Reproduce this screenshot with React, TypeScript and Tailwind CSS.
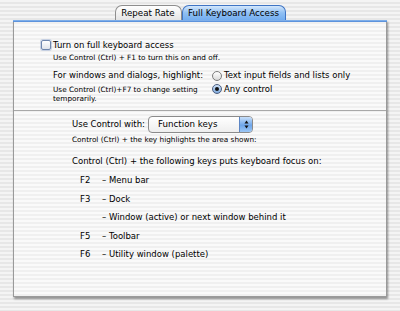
const stripes =
  "bg-[repeating-linear-gradient(180deg,#f4f4f4_0px,#f4f4f4_2px,#e7e7e7_2px,#e7e7e7_4px)]";

function Checkbox() {
  return (
    <span className="block w-[10px] h-[10px] rounded-[2px] border border-[#6f86ad] bg-[linear-gradient(180deg,#ffffff,#dfe3ea)] shadow-[0_0_0_1px_rgba(120,150,200,0.35)]" />
  );
}

function Radio({ checked }: { checked?: boolean }) {
  return (
    <span
      className={
        checked
          ? "flex items-center justify-center w-[10px] h-[10px] rounded-full border border-[#4d5f80] bg-[linear-gradient(180deg,#cfe2f8,#7fa9dc)]"
          : "block w-[10px] h-[10px] rounded-full border border-[#7c7c7c] bg-[linear-gradient(180deg,#ffffff,#d9d9d9)]"
      }
    >
      {checked && <span className="block w-[4px] h-[4px] rounded-full bg-[#111]" />}
    </span>
  );
}

function Popup() {
  return (
    <div className="flex w-[105px] h-[17px] rounded-[4px] border border-[#8b8b8b] bg-[linear-gradient(180deg,#ffffff,#eeeeee)] overflow-hidden">
      <span className="flex-1 pl-[9px] leading-[15px] text-[8.7px]">Function keys</span>
      <span className="flex items-center justify-center w-[13px] border-l border-[#5d86c4] bg-[linear-gradient(180deg,#c9e0fa,#6ea6ea_55%,#9cc7f5)]">
        <svg width="5" height="9" viewBox="0 0 5 9">
          <path d="M2.5 0.5 L4.5 3.5 L0.5 3.5 Z" fill="#111" />
          <path d="M0.5 5.5 L4.5 5.5 L2.5 8.5 Z" fill="#111" />
        </svg>
      </span>
    </div>
  );
}

const keys = [
  { k: "F2", t: "– Menu bar" },
  { k: "F3", t: "– Dock" },
  { k: "", t: "– Window (active) or next window behind it" },
  { k: "F5", t: "– Toolbar" },
  { k: "F6", t: "– Utility window (palette)" },
];

export default function App() {
  return (
    <div
      className={`w-[400px] h-[311px] overflow-hidden pt-[5px] text-black font-['DejaVu_Sans',sans-serif] ${stripes}`}
    >
      <div className="flex justify-center h-[15px]">
        <div className="w-[67px] h-[15px] rounded-t-[7px] border border-b-0 border-[#8e8e8e] bg-[linear-gradient(180deg,#ffffff,#e4e4e4)] text-center text-[8.7px] leading-[15px]">
          Repeat Rate
        </div>
        <div className="w-[104px] h-[15px] rounded-t-[7px] border border-b-0 border-[#3f74c4] bg-[linear-gradient(180deg,#d3e7fc,#8fbff3_50%,#74aef0)] text-center text-[8.7px] leading-[15px]">
          Full Keyboard Access
        </div>
      </div>

      <div className="mx-[13px] h-[277px] border border-t-0 border-[#9a9a9a] shadow-[1px_2px_2px_rgba(0,0,0,0.4)] bg-[repeating-linear-gradient(180deg,#fafafa_0px,#fafafa_2px,#f0f0f0_2px,#f0f0f0_4px)]">
        <div className="h-[2px] bg-[linear-gradient(180deg,#8fbcf0,#4d86d6)] -mx-[1px]" />

        <div className="h-[88px] pl-[27px] pt-[17px]">
          <div className="flex items-center gap-[2px] h-[12px]">
            <Checkbox />
            <span className="text-[8.5px] leading-[12px]">Turn on full keyboard access</span>
          </div>
          <p className="ml-[12px] mt-[2px] text-[7.3px] leading-[10px]">
            Use Control (Ctrl) + F1 to turn this on and off.
          </p>
          <div className="flex ml-[12px] mt-[6px]">
            <div className="w-[159px]">
              <p className="text-[8.5px] leading-[13px]">For windows and dialogs, highlight:</p>
              <p className="mt-[3px] text-[7.3px] leading-[9px]">
                Use Control (Ctrl)+F7 to change setting
                <br />
                temporarily.
              </p>
            </div>
            <div>
              <div className="flex items-center gap-[2px] h-[13px]">
                <Radio />
                <span className="text-[8.5px]">Text input fields and lists only</span>
              </div>
              <div className="flex items-center gap-[2px] h-[14px]">
                <Radio checked />
                <span className="text-[8.5px]">Any control</span>
              </div>
            </div>
          </div>
        </div>

        <div className="border-t border-[#a8a8a8] pl-[58px]">
          <div className="flex items-center h-[17px] mt-[5px]">
            <span className="w-[76px] text-[8.5px]">Use Control with:</span>
            <Popup />
          </div>
          <p className="mt-[2px] text-[7.3px] leading-[10px]">
            Control (Ctrl) + the key highlights the area shown:
          </p>
          <p className="mt-[10px] text-[8.5px] leading-[13px]">
            Control (Ctrl) + the following keys puts keyboard focus on:
          </p>
          <div className="mt-[3px] ml-[8px]">
            {keys.map((r) => (
              <div key={r.t} className="flex text-[8.5px] leading-[18.5px]">
                <span className="w-[22px]">{r.k}</span>
                <span>{r.t}</span>
              </div>
            ))}
          </div>
        </div>
      </div>
    </div>
  );
}
